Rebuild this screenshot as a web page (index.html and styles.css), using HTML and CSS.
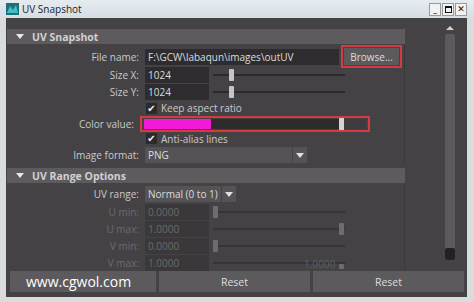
FILE: index.html
```html
<!DOCTYPE html>
<html lang="en">
<head>
    <meta charset="UTF-8">
    <title>UV Snapshot</title>
    <link rel="stylesheet" href="styles.css">
</head>
<body>
    <div class="window">
        <div class="titlebar">
            <svg class="app-icon" width="13" height="12" viewBox="0 0 13 12">
                <rect x="0" y="0" width="13" height="12" fill="#1d6f7a"/>
                <path d="M1 10 L4 3 L7 7 L10 2 L12 10 Z" fill="#3fc1c4"/>
            </svg>
            <span class="title">UV Snapshot</span>
            <div class="win-btns">
                <span class="win-btn">_</span>
                <span class="win-btn"><i class="max-box"></i></span>
                <span class="win-btn close">✕</span>
            </div>
        </div>

        <div class="client">
            <div class="scroll-area">
                <div class="panel">
                    <div class="section-head"><span class="tri"></span>UV Snapshot</div>
                    <div class="section-body">
                        <div class="row r-file">
                            <label class="lbl">File name:</label>
                            <div class="field wide">F:\GCW\labaqun\images\outUV</div>
                            <div class="hl browse-hl"><button class="btn browse">Browse...</button></div>
                        </div>
                        <div class="row r-17">
                            <label class="lbl">Size X:</label>
                            <div class="field num">1024</div>
                            <div class="slider"><span class="thumb" style="left: 16px"></span></div>
                        </div>
                        <div class="row r-17">
                            <label class="lbl">Size Y:</label>
                            <div class="field num">1024</div>
                            <div class="slider"><span class="thumb" style="left: 16px"></span></div>
                        </div>
                        <div class="row r-16">
                            <span class="lbl"></span>
                            <span class="check">✔</span><span class="check-text">Keep aspect ratio</span>
                        </div>
                        <div class="row r-15">
                            <label class="lbl color-lbl">Color value:</label>
                            <div class="hl color-hl">
                                <div class="swatch"></div>
                                <div class="color-track"><span class="cthumb"></span></div>
                                <div class="color-rest"></div>
                            </div>
                        </div>
                        <div class="row r-15">
                            <span class="lbl"></span>
                            <span class="check">✔</span><span class="check-text">Anti-alias lines</span>
                        </div>
                        <div class="row r-fmt">
                            <label class="lbl">Image format:</label>
                            <div class="combo fmt"><span class="combo-text">PNG</span><span class="combo-arrow"></span></div>
                        </div>
                    </div>

                    <div class="section-head second"><span class="tri"></span>UV Range Options</div>
                    <div class="section-body range">
                        <div class="row r-range">
                            <label class="lbl">UV range:</label>
                            <div class="combo uvr"><span class="combo-text">Normal (0 to 1)</span><span class="combo-arrow"></span></div>
                        </div>
                        <div class="row r-17 off">
                            <label class="lbl">U min:</label>
                            <div class="field num">0.0000</div>
                            <div class="slider"><span class="thumb" style="left: 0"></span></div>
                        </div>
                        <div class="row r-17 off">
                            <label class="lbl">U max:</label>
                            <div class="field num">1.0000</div>
                            <div class="slider"><span class="thumb" style="left: 126px"></span></div>
                        </div>
                        <div class="row r-17 off">
                            <label class="lbl">V min:</label>
                            <div class="field num">0.0000</div>
                            <div class="slider"><span class="thumb" style="left: 0"></span></div>
                        </div>
                        <div class="row r-17 off">
                            <label class="lbl">V max:</label>
                            <div class="field num">1.0000</div>
                            <div class="slider"><span class="thumb low" style="left: 126px"></span><span class="ghost">1.0000</span></div>
                        </div>
                    </div>
                </div>

                <div class="scrollbar">
                    <span class="up"></span>
                    <span class="track"><span class="track-end"></span></span>
                </div>
            </div>

            <div class="buttons">
                <button class="btn big first"><span class="watermark">www.cgwol.com</span></button>
                <button class="btn big">Reset</button>
                <button class="btn big">Reset</button>
            </div>
        </div>
    </div>
</body>
</html>
```

FILE: styles.css
```css
* {
    margin: 0;
    padding: 0;
    box-sizing: border-box;
}

body {
    width: 474px;
    height: 302px;
    overflow: hidden;
    background: #d9dbdd;
    font-family: "Open Sans", "DejaVu Sans", sans-serif;
    font-size: 10px;
}

.window {
    width: 474px;
    height: 302px;
    display: flex;
    flex-direction: column;
}

/* title bar */
.titlebar {
    height: 21px;
    display: flex;
    align-items: center;
    padding: 0 7px 0 6px;
    background: linear-gradient(#e6ebf0, #d6dde5);
}

.app-icon {
    margin-right: 3px;
}

.title {
    font-size: 10px;
    color: #1c1c1c;
}

.win-btns {
    margin-left: auto;
    display: flex;
    gap: 1px;
}

.win-btn {
    width: 12px;
    height: 13px;
    background: #f2f2f2;
    border: 1px solid #9a9a9a;
    font-size: 9px;
    line-height: 10px;
    text-align: center;
    color: #111;
    font-weight: bold;
    display: flex;
    align-items: center;
    justify-content: center;
}

.max-box {
    width: 7px;
    height: 7px;
    border: 1px solid #111;
    border-top-width: 2px;
}

/* dark client area */
.client {
    flex: 1;
    margin: 0 7px 5px 6px;
    background: #454245;
    display: flex;
    flex-direction: column;
}

.scroll-area {
    flex: 1;
    display: flex;
    padding-top: 11px;
}

.panel {
    width: 398px;
    margin-left: 1px;
}

.section-head {
    height: 15px;
    background: #5e5b5f;
    color: #d2d0d2;
    font-weight: bold;
    font-size: 10.5px;
    display: flex;
    align-items: center;
    padding-left: 9px;
}

.section-head.second {
    margin-top: 5px;
}

.tri {
    width: 0;
    height: 0;
    border-left: 4px solid transparent;
    border-right: 4px solid transparent;
    border-top: 5px solid #e8e8e8;
    margin-right: 8px;
}

.section-body {
    border-right: 1px solid #3b393c;
    padding-top: 3px;
}

.section-body.range {
    padding-top: 2px;
}

.row {
    display: flex;
    align-items: center;
    height: 17px;
    color: #cbc9cb;
}

.r-file { height: 19px; }
.r-16 { height: 16px; }
.r-15 { height: 15px; }
.r-fmt { height: 17px; }
.r-range { height: 18px; }

.lbl {
    width: 138px;
    text-align: right;
    padding-right: 6px;
    flex-shrink: 0;
}

.field {
    height: 16px;
    background: #2e2c2f;
    color: #dcdcdc;
    padding-left: 3px;
    line-height: 16px;
    white-space: nowrap;
    overflow: hidden;
}

.field.wide {
    width: 194px;
}

.field.num {
    width: 64px;
}

.hl {
    border: 2px solid #d43a3f;
}

.browse-hl {
    margin-left: 2px;
    height: 23px;
    width: 61px;
    padding: 1px;
}

.btn {
    border: none;
    background: #5c5a5d;
    color: #dedcde;
    font-family: inherit;
    font-size: 10px;
}

.browse {
    width: 100%;
    height: 100%;
}

.slider {
    position: relative;
    width: 132px;
    height: 16px;
    margin-left: 4px;
}

.slider::before {
    content: "";
    position: absolute;
    left: 0;
    right: 0;
    top: 7px;
    height: 2px;
    background: #2b292b;
}

.thumb {
    position: absolute;
    top: 2px;
    width: 5px;
    height: 12px;
    border-radius: 1px;
    background: #c6c4c6;
}

.check {
    width: 11px;
    height: 11px;
    background: #2b292b;
    color: #f0f0f0;
    font-size: 10px;
    line-height: 11px;
    text-align: center;
    margin-left: 1px;
}

.check-text {
    margin-left: 4px;
}

.color-lbl {
    width: 133px;
}

.color-hl {
    width: 230px;
    height: 16px;
    display: flex;
    align-items: center;
    padding: 0 2px;
}

.swatch {
    width: 67px;
    height: 10px;
    background: #f21ad8;
}

.color-track {
    position: relative;
    width: 133px;
    height: 10px;
    background: #2c2d2b;
}

.cthumb {
    position: absolute;
    right: 0;
    top: -1px;
    width: 5px;
    height: 12px;
    background: #d4d2d4;
}

.color-rest {
    flex: 1;
    height: 10px;
    background: #3d3b3e;
}

.combo {
    height: 16px;
    background: #555356;
    display: flex;
    align-items: center;
    color: #dcdcdc;
}

.combo.fmt { width: 162px; }
.combo.uvr { width: 91px; }

.combo-text {
    flex: 1;
    padding-left: 3px;
    white-space: nowrap;
}

.combo-arrow {
    width: 15px;
    height: 16px;
    border-left: 1px solid #444245;
    position: relative;
}

.combo-arrow::after {
    content: "";
    position: absolute;
    left: 3px;
    top: 6px;
    border-left: 4px solid transparent;
    border-right: 4px solid transparent;
    border-top: 5px solid #e0e0e0;
}

/* disabled rows */
.off {
    color: #6c6a6c;
}

.off .field {
    background: #3a383b;
    color: #6c6a6c;
}

.off .slider::before {
    background: #363437;
}

.off .thumb {
    background: #6e6c6f;
}

.thumb.low {
    top: 9px;
    height: 5px;
}

.ghost {
    position: absolute;
    left: 91px;
    top: 2px;
    color: #5f5d60;
}

/* scroll bar */
.scrollbar {
    margin-left: 39px;
    width: 11px;
    display: flex;
    flex-direction: column;
    align-items: center;
}

.up {
    width: 0;
    height: 0;
    margin-top: -3px;
    border-left: 4px solid transparent;
    border-right: 4px solid transparent;
    border-bottom: 4px solid #cfcfcf;
}

.track {
    margin-top: 4px;
    width: 10px;
    height: 226px;
    background: #5c5a5d;
    border-radius: 2px;
    display: flex;
    align-items: flex-end;
}

.track-end {
    width: 10px;
    height: 12px;
    background: #232123;
    border-radius: 2px;
}

/* bottom buttons */
.buttons {
    display: flex;
    gap: 3px;
    padding: 0 3px 5px 4px;
    height: 26px;
}

.btn.big {
    height: 21px;
    font-size: 10.5px;
}

.btn.big.first {
    width: 146px;
    text-align: left;
}

.btn.big:not(.first) {
    flex: 1;
}

.watermark {
    font-size: 14px;
    color: #ffffff;
    padding-left: 16px;
}
```
